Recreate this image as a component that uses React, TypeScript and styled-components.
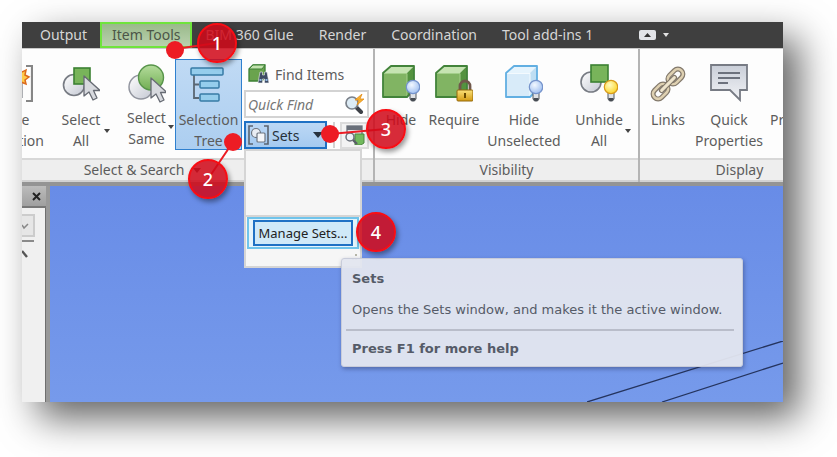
import React from 'react';
import styled, { createGlobalStyle, css } from 'styled-components';

const GlobalStyle = createGlobalStyle`
  *, *::before, *::after { box-sizing: border-box; }
  body { margin: 0; background: #ffffff; font-family: 'Noto Sans', 'Open Sans', sans-serif; }
  button, input { font: inherit; color: inherit; }
  svg { display: block; flex: none; }
`;

const Page = styled.main`
  padding: 22px 54px 55px 22px;
  overflow: hidden;
`;

const AppWindow = styled.div`
  position: relative;
  box-shadow: 16px 16px 36px rgba(0, 0, 0, 0.62);
`;

const Clip = styled.div`
  overflow: hidden;
  font-size: 14px;
  color: #5c5c5c;
`;

const TabBar = styled.nav`
  display: flex;
  align-items: stretch;
  gap: 1px;
  height: 26px;
  padding-left: 6px;
  background: #3f3f3f;
`;

const Tab = styled.button<{ $active?: boolean }>`
  padding: 0 12px;
  border: 0;
  background: transparent;
  color: #d6d6d6;
  line-height: 26px;
  white-space: nowrap;
  ${(p) =>
    p.$active &&
    css`
      padding: 0 10px;
      border: 2px solid #6fe43c;
      background: linear-gradient(#9aba8b, #b9d1ad);
      color: #4c5648;
      line-height: 22px;
    `}
`;

const RibbonToggle = styled.button`
  display: flex;
  align-items: center;
  gap: 7px;
  margin-left: 33px;
  padding: 0;
  border: 0;
  background: transparent;
`;

const Ribbon = styled.div`
  display: flex;
  height: 134px;
  border-top: 1px solid #c9c9c9;
  background: #fdfdfd;
`;

const Panel = styled.section<{ $width?: number }>`
  display: flex;
  flex-direction: column;
  flex: ${(p) => (p.$width ? `0 0 ${p.$width}px` : '1 0 205px')};
  border-right: 2px solid #b4b4b4;
`;

const PanelBody = styled.div<{ $inset?: number }>`
  display: flex;
  flex: 1;
  padding-left: ${(p) => p.$inset ?? 0}px;
`;

const PanelTitle = styled.h2<{ $pad?: number }>`
  display: flex;
  align-items: center;
  justify-content: center;
  gap: 9px;
  height: 24px;
  margin: 0;
  padding-right: ${(p) => p.$pad ?? 0}px;
  border-top: 2px solid #d8d8d8;
  border-bottom: 2px solid #d2d2d2;
  background: #eeeeee;
  font-size: 14px;
  font-weight: 400;
  line-height: 20px;
`;

const Tool = styled.button<{ $width: number; $clip?: boolean; $active?: boolean }>`
  position: relative;
  display: flex;
  flex-direction: column;
  flex: 0 0 ${(p) => p.$width}px;
  align-items: ${(p) => (p.$clip ? 'flex-end' : 'center')};
  height: 91px;
  margin-top: 10px;
  padding: 4px 0 0;
  border: 1px solid transparent;
  overflow: ${(p) => (p.$clip ? 'hidden' : 'visible')};
  background: transparent;
  ${(p) =>
    p.$clip &&
    css`
      border: 0;
      padding-top: 5px;
    `}
  ${(p) =>
    p.$active &&
    css`
      border-color: #2f80cf;
      background: linear-gradient(#c0daf4, #accef0);
    `}
`;

const ToolFace = styled.span`
  display: flex;
  flex-direction: column;
  align-items: center;
`;

const ToolLabel = styled.span<{ $raised?: boolean }>`
  margin-top: ${(p) => (p.$raised ? 3 : 7)}px;
  line-height: 21px;
  text-align: center;
  white-space: pre;
`;

const ToolArrow = styled.span<{ $inset: number; $raised?: boolean }>`
  position: absolute;
  right: ${(p) => p.$inset}px;
  bottom: ${(p) => (p.$raised ? 20 : 16)}px;
`;

const SearchColumn = styled.div`
  display: flex;
  flex-direction: column;
  gap: 3px;
  width: 125px;
  margin: 12px 0 0 2px;
`;

const FindItems = styled.button`
  display: flex;
  align-items: center;
  gap: 6px;
  height: 26px;
  padding: 0 0 0 4px;
  border: 0;
  background: transparent;
`;

const QuickFind = styled.label`
  display: flex;
  align-items: center;
  height: 28px;
  padding: 0 2px 0 2px;
  border: 2px solid #d3d3d3;
  background: #ffffff;
`;

const QuickFindInput = styled.input`
  flex: 1;
  min-width: 0;
  padding: 0;
  border: 0;
  outline: 0;
  background: transparent;
  font-style: italic;
  &::placeholder { color: #777777; opacity: 1; }
`;

const SetsRow = styled.div`
  position: relative;
  display: flex;
  align-items: center;
  justify-content: space-between;
  height: 28px;
`;

const SetsButton = styled.button`
  display: flex;
  align-items: center;
  gap: 3px;
  width: 83px;
  height: 28px;
  padding: 0 2px;
  border: 2px solid #1f71c4;
  background: linear-gradient(#bcd8f5, #a5caf0);
  color: #26303a;
`;

const ArrowEnd = styled.span`
  margin-left: auto;
`;

const Divider = styled.span`
  width: 2px;
  height: 26px;
  background: #d2d2d2;
`;

const SmallButton = styled.button`
  display: flex;
  align-items: center;
  justify-content: center;
  width: 29px;
  height: 27px;
  padding: 0;
  border: 2px solid #dcdcdc;
  background: #f3f3f3;
`;

const Menu = styled.div`
  position: absolute;
  top: 28px;
  left: 0;
  z-index: 2;
  width: 118px;
  border: 2px solid #d5d5d5;
  background: #f6f6f6;
`;

const MenuEmpty = styled.div`
  height: 66px;
  border-bottom: 2px solid #d5d5d5;
`;

const MenuItemFrame = styled.div`
  margin: 0 1px;
  padding: 1px 4px;
  border: 2px solid #70c4eb;
  background: #e4f4fc;
`;

const MenuItem = styled.button`
  display: block;
  width: 100%;
  height: 26px;
  padding: 0;
  border: 2px solid #1f71c4;
  background: #cfe9f8;
  color: #222222;
  line-height: 22px;
  white-space: nowrap;
  font-size: 13px;
`;

const MenuFoot = styled.div`
  display: flex;
  align-items: center;
  justify-content: flex-end;
  height: 17px;
  padding-right: 3px;
`;

const Workspace = styled.div`
  position: relative;
  display: flex;
  min-height: 220px;
  border-top: 4px solid #949494;
`;

const SidePanel = styled.aside`
  width: 28px;
  border-right: 4px solid #999999;
  background: #f0f0f0;
  box-shadow: inset -1px 0 0 #6f6f6f;
`;

const SideHeader = styled.div`
  display: flex;
  align-items: center;
  justify-content: flex-end;
  height: 22px;
  border-bottom: 2px solid #777777;
  background: linear-gradient(#bcbcbc, #9f9f9f);
`;

const CloseButton = styled.button`
  padding: 0 5px 0 0;
  border: 0;
  background: transparent;
`;

const SideField = styled.button`
  display: flex;
  align-items: center;
  width: 13px;
  height: 23px;
  margin: 6px 0 3px;
  padding: 0;
  border: 2px solid #cccccc;
  border-left: 0;
  background: #e6e6e6;
`;

const SideList = styled.div`
  width: 12px;
  padding-top: 8px;
  border-top: 2px solid #8a8a8a;
`;

const Viewport = styled.div`
  position: relative;
  flex: 1;
  background: linear-gradient(#688ce7, #769aeb);
`;

const ModelLines = styled.svg`
  position: absolute;
  right: 0;
  bottom: 0;
`;

const Tooltip = styled.div`
  position: absolute;
  left: 291px;
  top: 72px;
  z-index: 3;
  width: 402px;
  height: 109px;
  padding: 10px 8px 0 4px;
  border: 1px solid #c8ccda;
  border-radius: 3px;
  background: rgba(227, 230, 239, 0.95);
  box-shadow: 1px 2px 4px rgba(40, 50, 90, 0.45);
  color: #555b68;
  font-family: 'DejaVu Sans', sans-serif;
  font-size: 13px;
`;

const TipLine = styled.p<{ $bold?: boolean }>`
  margin: 0;
  padding-left: 6px;
  line-height: 20px;
  font-weight: ${(p) => (p.$bold ? 700 : 400)};
  white-space: nowrap;
`;

const TipText = styled.div`
  padding: 11px 0 9px;
  margin-bottom: 8px;
  border-bottom: 2px solid #b9bdca;
`;

const Pointers = styled.svg`
  position: absolute;
  left: 0;
  top: 0;
  z-index: 4;
  pointer-events: none;
`;

const Callout = styled.span<{ $x: number; $y: number }>`
  position: absolute;
  left: ${(p) => p.$x}px;
  top: ${(p) => p.$y}px;
  z-index: 5;
  width: 40px;
  height: 40px;
  border: 2px solid #f80d14;
  border-radius: 50%;
  background: rgba(208, 8, 24, 0.86);
  box-shadow: 2px 3px 5px rgba(0, 0, 0, 0.4);
  color: #ffffff;
  font-size: 18px;
  font-weight: 500;
  line-height: 36px;
  text-align: center;
`;

const HiddenDefs = styled.svg`
  position: absolute;
`;

const Arrow = ({ size = 6, color = '#444444' }: { size?: number; color?: string }) => (
  <svg width={size} height={size / 2 + 1} viewBox="0 0 12 7" preserveAspectRatio="none" aria-hidden="true">
    <path d="M0 0H12L6 7Z" fill={color} />
  </svg>
);

const Gradients = () => (
  <HiddenDefs width="0" height="0" aria-hidden="true">
    <defs>
      <linearGradient id="silver" x1="0" y1="0" x2="1" y2="1">
        <stop offset="0" stopColor="#ffffff" />
        <stop offset="1" stopColor="#c3c7d2" />
      </linearGradient>
      <linearGradient id="leaf" x1="0" y1="0" x2="0" y2="1">
        <stop offset="0" stopColor="#b4dc9c" />
        <stop offset="1" stopColor="#72ae54" />
      </linearGradient>
      <linearGradient id="gold" x1="0" y1="0" x2="0" y2="1">
        <stop offset="0" stopColor="#fbe27a" />
        <stop offset="1" stopColor="#d59b13" />
      </linearGradient>
      <radialGradient id="blueBulb" cx="0.4" cy="0.35" r="0.7">
        <stop offset="0" stopColor="#f2f8ff" />
        <stop offset="1" stopColor="#9cbdf0" />
      </radialGradient>
      <radialGradient id="goldBulb" cx="0.4" cy="0.35" r="0.7">
        <stop offset="0" stopColor="#fffbc0" />
        <stop offset="1" stopColor="#fbd323" />
      </radialGradient>
      <linearGradient id="bubble" x1="0" y1="0" x2="0" y2="1">
        <stop offset="0" stopColor="#c9ced8" />
        <stop offset="1" stopColor="#f2f3f6" />
      </linearGradient>
    </defs>
  </HiddenDefs>
);

const Icon = ({ children, w = 38, h = 38 }: { children?: React.ReactNode; w?: number; h?: number }) => (
  <svg width={w} height={h} viewBox={`0 0 ${w} ${h}`} fill="none" aria-hidden="true">
    {children}
  </svg>
);

const Cursor = ({ x, y }: { x: number; y: number }) => (
  <path
    transform={`translate(${x} ${y})`}
    d="M0 0V20L5 16L9 24L13 22L9.5 14.5H16Z"
    fill="#d7d9de"
    stroke="#676b74"
    strokeWidth="1.3"
    strokeLinejoin="round"
  />
);

const Bulb = ({ x, y, gold }: { x: number; y: number; gold?: boolean }) => (
  <g transform={`translate(${x} ${y})`}>
    <path d="M4.500 12H10.500V19L9 21H6L4.500 19Z" fill="#dfe2e6" stroke="#53585f" />
    <path d="M5 18H10V19L9 21H6L5 19Z" fill="#464b52" />
    <circle cx="7.500" cy="7" r="6.700" fill={gold ? 'url(#goldBulb)' : 'url(#blueBulb)'} stroke={gold ? '#d79a1c' : '#7593cb'} strokeWidth="1.200" />
  </g>
);

const Cube = ({ pale }: { pale?: boolean }) => {
  const line = pale ? '#62afe2' : '#42833a';
  return (
    <g strokeLinejoin="round">
      <path d="M1 9L9 2H32L25 9Z" fill={pale ? '#e6f4fd' : '#c6e4b2'} />
      <path d="M25 9L32 2V26L25 33Z" fill={pale ? '#bedef3' : '#54933f'} />
      <path d="M1 9H25V33H1Z" fill={pale ? '#d8ebf9' : '#81b463'} />
      <path d="M2 9.500H25V32" stroke={pale ? '#f4fafe' : '#a4cf8b'} strokeWidth="1" />
      <path d="M1 9L9 2H32V26L25 33H1Z" stroke={line} strokeWidth="1.800" />
    </g>
  );
};

const icons = {
  save: (
    <Icon>
      <path d="M24 17H27V34H24Z" fill="#8b8e96" stroke="#5f636b" />
      <path d="M24 4L27 8L31 6L30 11L34 13L30 16L31 20L26 18L24 20Z" fill="#ffca49" stroke="#dc6a1d" strokeWidth="1.500" />
      <path d="M31 2H37V37H31" stroke="#868686" strokeWidth="2.200" />
    </Icon>
  ),
  selectAll: (
    <Icon>
      <circle cx="12" cy="21" r="10.500" fill="url(#silver)" stroke="#777b83" strokeWidth="1.600" />
      <rect x="12" y="4" width="16" height="16" fill="#78b45a" stroke="#3b8132" strokeWidth="1.600" />
      <Cursor x={22} y={12} />
    </Icon>
  ),
  selectSame: (
    <Icon h={40}>
      <circle cx="13" cy="23" r="12" fill="url(#silver)" stroke="#92959f" strokeWidth="1.500" />
      <circle cx="23" cy="13.500" r="12.500" fill="url(#leaf)" stroke="#57944a" strokeWidth="1.400" />
      <Cursor x={23} y={14} />
    </Icon>
  ),
  tree: (
    <Icon>
      <path d="M5 10V34H10M5 20.500H10" stroke="#5a6773" strokeWidth="1.800" />
      <g fill="#95cdec" stroke="#377ba5" strokeWidth="1.500">
        <rect x="2" y="4" width="32" height="7" rx="1" />
        <rect x="11" y="17" width="19" height="7" rx="1" />
        <rect x="11" y="30" width="19" height="7" rx="1" />
      </g>
    </Icon>
  ),
  hide: (
    <Icon>
      <Cube />
      <Bulb x={23.500} y={16} />
    </Icon>
  ),
  require: (
    <Icon>
      <Cube />
      <path d="M25 28V22A5 5 0 0 1 35 22V28" stroke="#70584b" strokeWidth="2.800" />
      <rect x="22" y="26" width="16" height="11" rx="1" fill="url(#gold)" stroke="#94690b" />
      <path d="M30 29V34" stroke="#684900" strokeWidth="2" />
    </Icon>
  ),
  hideUnselected: (
    <Icon>
      <Cube pale />
      <Bulb x={23.500} y={16} />
    </Icon>
  ),
  unhide: (
    <Icon>
      <circle cx="11" cy="18" r="10" fill="url(#silver)" stroke="#777b83" strokeWidth="1.600" />
      <rect x="11" y="1" width="17" height="17" fill="#78b45a" stroke="#3b8132" strokeWidth="1.600" />
      <Bulb x={23.500} y={16} gold />
    </Icon>
  ),
  links: (
    <Icon>
      <g transform="rotate(-45 19 20)" strokeLinecap="round">
        <g stroke="#83796c" strokeWidth="5">
          <rect x="0" y="15" width="17" height="10" rx="5" />
          <rect x="21" y="15" width="17" height="10" rx="5" />
        </g>
        <g stroke="#ded0b1" strokeWidth="2.600">
          <rect x="0" y="15" width="17" height="10" rx="5" />
          <rect x="21" y="15" width="17" height="10" rx="5" />
        </g>
        <path d="M10 20H28" stroke="#83796c" strokeWidth="5.500" />
        <path d="M10 20H28" stroke="#eee4cc" strokeWidth="3" />
      </g>
    </Icon>
  ),
  quick: (
    <Icon>
      <path d="M1 1H37V26H30V36L20 26H1Z" fill="url(#bubble)" stroke="#777b84" strokeWidth="1.800" />
      <path d="M8 9H30M8 14H30M8 19H18" stroke="#6c717c" strokeWidth="2" />
    </Icon>
  ),
};

const FindIcon = () => (
  <Icon w={21} h={20}>
    <path d="M1 5L5 1H17V13L14 17H1Z" fill="#6aa34e" stroke="#3d8135" strokeWidth="1.300" />
    <path d="M1 5L5 1H17L14 5Z" fill="#c2e2ae" stroke="#3d8135" />
    <path d="M12 8H14.500V11H16.500V8H19L21 19H16.500V15H14.500V19H10Z" fill="#3d4b63" stroke="#f2f4f7" strokeWidth="0.600" />
    <path d="M11.500 16H13.500M17.500 16H19.500" stroke="#8fb7e2" strokeWidth="2" />
  </Icon>
);

const SearchIcon = () => (
  <Icon w={21} h={20}>
    <path d="M12 13L17 18" stroke="#3d4047" strokeWidth="4" strokeLinecap="round" />
    <circle cx="8" cy="9" r="6" fill="#dcebf5" stroke="#7a8089" strokeWidth="1.700" />
    <path d="M18 0L11 6H15L13 11L20 5H16Z" fill="#f8b32f" stroke="#e28a18" strokeWidth="0.800" />
  </Icon>
);

const SetsIcon = () => (
  <Icon w={21} h={20}>
    <path d="M5 1H1V19H5M16 1H20V19H16" stroke="#5b6470" strokeWidth="1.600" />
    <circle cx="8" cy="8" r="4.500" fill="#e9edf3" stroke="#6d7580" strokeWidth="1.200" />
    <rect x="9" y="8" width="8" height="9" rx="1" fill="#f4f6f9" stroke="#6d7580" strokeWidth="1.200" />
  </Icon>
);

const InspectIcon = () => (
  <Icon w={21} h={20}>
    <rect x="3" y="1" width="15" height="13" fill="#dfe2e6" stroke="#6a707a" strokeWidth="1.300" />
    <path d="M3 3H18" stroke="#6a707a" strokeWidth="4" />
    <path d="M11 9H20V18L17 20H11Z" fill="#72ba5d" stroke="#4d8742" />
    <circle cx="6" cy="12" r="4" fill="#eef3f7" stroke="#6a707a" strokeWidth="1.500" />
    <path d="M9 15L13 19" stroke="#5a5f68" strokeWidth="2.400" />
  </Icon>
);

interface ToolSpec {
  icon?: React.ReactNode;
  label: string;
  width: number;
  arrowInset?: number;
  clip?: boolean;
  active?: boolean;
  raised?: boolean;
}

const ToolButton = ({ icon, label, width, arrowInset, clip, active, raised }: ToolSpec) => (
  <Tool $width={width} $clip={clip} $active={active}>
    <ToolFace>
      {icon}
      <ToolLabel $raised={raised}>{label}</ToolLabel>
    </ToolFace>
    {arrowInset !== undefined && (
      <ToolArrow $inset={arrowInset} $raised={raised}>
        <Arrow />
      </ToolArrow>
    )}
  </Tool>
);

const tabs = ['Output', 'Item Tools', 'BIM 360 Glue', 'Render', 'Coordination', 'Tool add-ins 1'];

const selectTools: ToolSpec[] = [
  { icon: icons.save, label: 'Save\nSelection', width: 22, clip: true },
  { icon: icons.selectAll, label: 'Select\nAll', width: 74, arrowInset: 7 },
  { icon: icons.selectSame, label: 'Select\nSame', width: 57, arrowInset: 0, raised: true },
  { icon: icons.tree, label: 'Selection\nTree', width: 67, active: true },
];

const visibilityTools: ToolSpec[] = [
  { icon: icons.hide, label: 'Hide', width: 50 },
  { icon: icons.require, label: 'Require', width: 56 },
  { icon: icons.hideUnselected, label: 'Hide\nUnselected', width: 84 },
  { icon: icons.unhide, label: 'Unhide\nAll', width: 66, arrowInset: 0 },
];

const displayTools: ToolSpec[] = [
  { icon: icons.links, label: 'Links', width: 52 },
  { icon: icons.quick, label: 'Quick\nProperties', width: 68 },
  { icon: <Icon />, label: 'Properties', width: 80 },
];

const App = () => (
  <Page>
    <GlobalStyle />
    <Gradients />
    <AppWindow>
      <Clip>
        <TabBar>
          {tabs.map((t) => (
            <Tab key={t} $active={t === 'Item Tools'}>
              {t}
            </Tab>
          ))}
          <RibbonToggle aria-label="Minimize ribbon">
            <Icon w={17} h={10}>
              <rect width="17" height="10" rx="2" fill="#e2e4e8" />
              <path d="M5 7L8.500 3L12 7Z" fill="#333333" />
            </Icon>
            <Arrow color="#e2e2e2" />
          </RibbonToggle>
        </TabBar>
        <Ribbon>
          <Panel $width={353}>
            <PanelBody>
              {selectTools.map((t) => (
                <ToolButton key={t.label} {...t} />
              ))}
              <SearchColumn>
                <FindItems>
                  <FindIcon />
                  Find Items
                </FindItems>
                <QuickFind>
                  <QuickFindInput placeholder="Quick Find" aria-label="Quick Find" />
                  <SearchIcon />
                </QuickFind>
                <SetsRow>
                  <SetsButton aria-haspopup="menu" aria-expanded="true">
                    <SetsIcon />
                    Sets
                    <ArrowEnd>
                      <Arrow size={10} color="#27323e" />
                    </ArrowEnd>
                  </SetsButton>
                  <Divider />
                  <SmallButton aria-label="Selection Inspector">
                    <InspectIcon />
                  </SmallButton>
                  <Menu role="menu">
                    <MenuEmpty />
                    <MenuItemFrame>
                      <MenuItem role="menuitem">Manage Sets...</MenuItem>
                    </MenuItemFrame>
                    <MenuFoot>
                      <Icon w={7} h={7}>
                        <path d="M5 1H7M2 5H4M5 5H7" stroke="#b5b5a8" strokeWidth="2" />
                      </Icon>
                    </MenuFoot>
                  </Menu>
                </SetsRow>
              </SearchColumn>
            </PanelBody>
            <PanelTitle $pad={110}>
              Select &amp; Search
              <Arrow size={8} />
            </PanelTitle>
          </Panel>
          <Panel $width={265}>
            <PanelBody $inset={1}>
              {visibilityTools.map((t) => (
                <ToolButton key={t.label} {...t} />
              ))}
            </PanelBody>
            <PanelTitle>Visibility</PanelTitle>
          </Panel>
          <Panel>
            <PanelBody $inset={2}>
              {displayTools.map((t) => (
                <ToolButton key={t.label} {...t} />
              ))}
            </PanelBody>
            <PanelTitle $pad={5}>Display</PanelTitle>
          </Panel>
        </Ribbon>
        <Workspace>
          <SidePanel>
            <SideHeader>
              <CloseButton aria-label="Close">
                <Icon w={9} h={9}>
                  <path d="M1 1L8 8M8 1L1 8" stroke="#222222" strokeWidth="2" />
                </Icon>
              </CloseButton>
            </SideHeader>
            <SideField aria-label="Expand">
              <Icon w={7} h={8}>
                <path d="M0 3L2 6L6 2" stroke="#888888" strokeWidth="1.500" />
              </Icon>
            </SideField>
            <SideList>
              <Icon w={8} h={9}>
                <path d="M0 1L5 7" stroke="#555555" strokeWidth="2.400" />
              </Icon>
            </SideList>
          </SidePanel>
          <Viewport>
            <ModelLines width="196" height="61" viewBox="0 0 196 61" aria-hidden="true">
              <path d="M0 61L196 0M75 61L196 22" stroke="#25345e" strokeWidth="1.300" />
            </ModelLines>
            <Tooltip role="tooltip">
              <TipLine $bold>Sets</TipLine>
              <TipText>
                <TipLine>Opens the Sets window, and makes it the active window.</TipLine>
              </TipText>
              <TipLine $bold>Press F1 for more help</TipLine>
            </Tooltip>
          </Viewport>
        </Workspace>
      </Clip>
      <Pointers width="380" height="220" viewBox="0 0 380 220" aria-hidden="true">
        <g stroke="#ec1c24" strokeWidth="2">
          <path d="M153 27L195 21M211 120L186 157M308 112L364 107" />
        </g>
        <g fill="#ed1c24">
          <circle cx="153" cy="28" r="9" />
          <circle cx="211" cy="120" r="9" />
          <circle cx="308" cy="112" r="9" />
        </g>
      </Pointers>
      <Callout $x={175} $y={1}>1</Callout>
      <Callout $x={166} $y={137}>2</Callout>
      <Callout $x={344} $y={87}>3</Callout>
      <Callout $x={334} $y={190}>4</Callout>
    </AppWindow>
  </Page>
);

export default App;
